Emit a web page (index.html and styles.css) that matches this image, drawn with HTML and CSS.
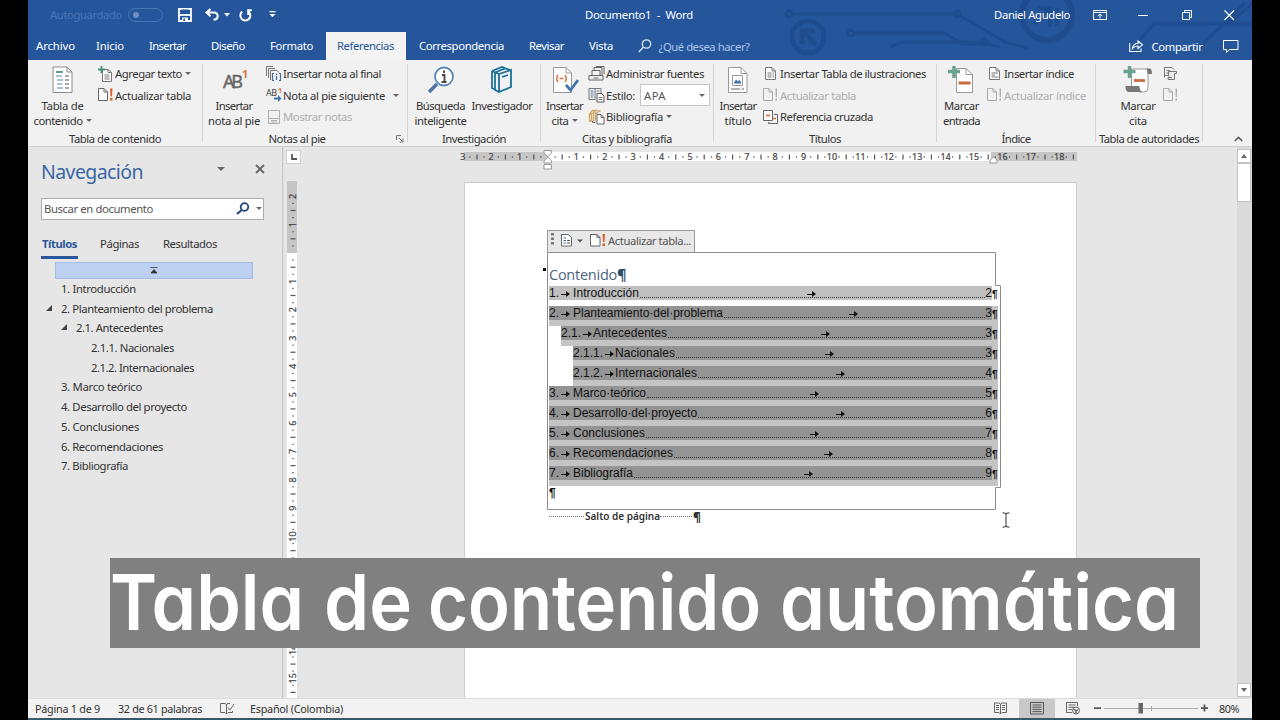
FILE: index.html
```html
<!DOCTYPE html>
<html lang="es">
<head>
<meta charset="utf-8">
<title>Documento1 - Word</title>
<link rel="stylesheet" href="styles.css">
</head>
<body>
<div class="window">
  <header class="top">
    <svg class="circuit" width="470" height="60" viewBox="782 0 470 60" fill="none" stroke="#1f4c8e" stroke-width="3">
      <path d="M793 14H955L968 20L1005 42L1028 48M855 33H945L962 44H985M890 47L902 42H980L1000 47M1140 40L1154 24H1252M1200 47L1245 3M1228 24L1252 4"/>
      <circle cx="789" cy="14" r="3"/><circle cx="957" cy="14" r="3"/><circle cx="851" cy="33" r="3"/><circle cx="984" cy="42" r="3"/>
      <circle cx="808" cy="37" r="16" stroke-width="5"/><path d="M802 44V31H815M803 32L816 45" stroke-width="5"/>
      <circle cx="1047" cy="15" r="25" stroke-width="6"/><path d="M1038 8H1050V27M1049 10L1034 24M1057 8V26" stroke-width="4"/>
    </svg>
    <div class="titlebar">
      <span class="auto"><span class="fit" data-w="72">Autoguardado</span></span>
      <span class="toggle"></span>
      <svg class="i-save" width="14" height="14" viewBox="0 0 14 14"><path d="M1 1H13V13H1Z" fill="none" stroke="#fff" stroke-width="1.8"/><path d="M3 1.5H11V6H3Z" fill="#2558a0"/><path d="M1 7H13" stroke="#fff" stroke-width="1.8"/><path d="M4 9.5H10V13H4Z" fill="#fff"/><path d="M5.3 10.5H7V13H5.3Z" fill="#2558a0"/></svg>
      <svg class="i-undo" width="14" height="13" viewBox="0 0 14 13" fill="none" stroke="#fff" stroke-width="2"><path d="M5.5 1L1.5 4.6L5.5 8.2M2 4.6H9C14 4.6 14 11.6 8.5 11.6"/></svg>
      <svg class="i-dd" width="6" height="4" viewBox="0 0 6 4"><path d="M0 0H6L3 3.5Z" fill="#fff"/></svg>
      <svg class="i-redo" width="13" height="14" viewBox="0 0 13 14" fill="none" stroke="#fff" stroke-width="2"><path d="M3.2 3.6A5 5 0 1 0 9.6 3.7M9.2 7V2.2H12.8"/></svg>
      <svg class="i-qat" width="7" height="7" viewBox="0 0 7 7"><path d="M.5 0H6.5V1.2H.5ZM.5 3H6.5L3.5 6.3Z" fill="#fff"/></svg>
      <span class="doc-title"><span class="fit" data-w="108">Documento1&nbsp; -&nbsp; Word</span></span>
      <span class="user"><span class="fit" data-w="76">Daniel Agudelo</span></span>
      <svg class="win-icons" width="142" height="12" viewBox="1094 8 142 12" fill="none" stroke="#fff"><path d="M1094.5 9.5H1107.5V18.5H1094.5ZM1094.5 11.5H1107.5M1101 17.5V13M1098.800 15L1101 13L1103.200 15"/><path d="M1139 14.500H1149"/><path d="M1183.500 11.500H1190.500V18.500H1183.500ZM1185.500 11V9.500H1192.500V16.500H1191"/><path d="M1225.500 9.500L1235 19M1235 9.500L1225.500 19" stroke-width="1.2"/></svg>
    </div>
    <nav class="tabs">
      <span class="tab first"><span class="fit" data-w="39">Archivo</span></span>
      <span class="tab"><span class="fit" data-w="28">Inicio</span></span>
      <span class="tab"><span class="fit" data-w="37">Insertar</span></span>
      <span class="tab"><span class="fit" data-w="34">Diseño</span></span>
      <span class="tab"><span class="fit" data-w="43">Formato</span></span>
      <span class="tab active"><span class="fit" data-w="57">Referencias</span></span>
      <span class="tab"><span class="fit" data-w="85">Correspondencia</span></span>
      <span class="tab"><span class="fit" data-w="35">Revisar</span></span>
      <span class="tab"><span class="fit" data-w="24">Vista</span></span>
      <svg class="i-find" width="14" height="14" viewBox="0 0 14 14" fill="none" stroke="#dfe8f5" stroke-width="1.3"><circle cx="8.500" cy="5" r="4.200"/><path d="M5.500 8L.8 13"/></svg>
      <span class="tell"><span class="fit" data-w="91">¿Qué desea hacer?</span></span>
      <svg class="i-share" width="15" height="14" viewBox="0 0 15 14" fill="none" stroke="#fff" stroke-width="1.100"><path d="M.7 4V12.500H12V9.500M3.500 9.500C4 5.500 6.500 4.500 9 4.500V2L13.500 5.800L9 9.500V7C7 7 5 7.500 3.500 9.500Z"/></svg>
      <span class="share"><span class="fit" data-w="51">Compartir</span></span>
      <svg class="i-comment" width="16" height="14" viewBox="0 0 16 14" fill="none" stroke="#fff"><path d="M.5 .5H15V9.500H6.500L3.500 12.500V9.500H.5Z"/></svg>
    </nav>
  </header>

  <section class="ribbon">
    <div class="group g1">
      <div class="body">
        <div class="big"><svg width="22" height="28" viewBox="0 0 22 28" fill="none"><path d="M1 1H15L20 6V26.500H1Z" fill="#fff" stroke="#8a8a8a"/><path d="M15 1V6H20" stroke="#8a8a8a"/><path d="M4 6H11" stroke="#2f7a6b" stroke-width="1.500"/><path d="M4 10H10M5 14H11M5 18H10M5 22H11" stroke="#5583ac"/><path d="M13 10H17M13 14H17M13 18H17M13 22H17" stroke="#555"/></svg>
          <span class="fit" data-w="42">Tabla de</span><span class="ln"><span class="fit" data-w="49">contenido</span><i class="dd"></i></span></div>
        <div class="col">
          <div class="row"><svg width="16" height="16" viewBox="0 0 16 16" fill="none"><path d="M4.500 3.500H10L13.500 6.500V15.500H4.500Z" fill="#fff" stroke="#777"/><path d="M10 3.500V6.500H13.500M6.500 9H11.500M6.500 11H11.500M6.500 13H11.500" stroke="#777"/><path d="M3.500 0V7M0 3.500H7" stroke="#4d8f7e" stroke-width="1.800"/></svg><span class="fit" data-w="67">Agregar texto</span><i class="dd"></i></div>
          <div class="row"><svg width="16" height="16" viewBox="0 0 16 16" fill="none"><path d="M.5 1.500H6L9.500 5V13.500H.5Z" fill="#fff" stroke="#666"/><path d="M6 1.500V5H9.500" stroke="#666"/><path d="M12 1.500H14.500L14 9.500H12.500ZM12 11H14.500V13.500H12Z" fill="#d9622b"/></svg><span class="fit" data-w="76">Actualizar tabla</span></div>
        </div>
      </div>
      <div class="caption"><span class="fit" data-w="92">Tabla de contenido</span></div>
    </div>
    <div class="group g2">
      <div class="body">
        <div class="big"><svg width="28" height="28" viewBox="0 0 28 28"><text x="3" y="22" class="ab" textLength="20">AB</text><text x="22" y="12" class="one">1</text></svg>
          <span class="fit" data-w="37">Insertar</span><span class="fit" data-w="52">nota al pie</span></div>
        <div class="col">
          <div class="row"><svg width="16" height="16" viewBox="0 0 16 16" fill="none" stroke="#777"><path d="M.5 10V.5H7M2.500 12V2.500H9M4.500 14V4.500H11L13 6.500" /><path d="M8 7.500H6.500V14.500H8M13 7.500H14.500V14.500H13M10.500 10V14M10.500 7.500V9" stroke="#4472a8" stroke-width="1.200"/></svg><span class="fit" data-w="98">Insertar nota al final</span></div>
          <div class="row"><svg width="16" height="16" viewBox="0 0 16 16"><text x="0" y="9" class="abs" textLength="11">AB</text><text x="12" y="6" class="ones">1</text><path d="M8 10.500H12V8L15.500 11.500L12 15V12.500H8Z" fill="#3f74b0"/></svg><span class="fit" data-w="102">Nota al pie siguiente</span><i class="dd far"></i></div>
          <div class="row off"><svg width="16" height="16" viewBox="0 0 16 16" fill="none" stroke="#b0b0b0"><path d="M2.500 1.500H13.500V14.500H2.500ZM2.500 9.500H13.500M5 11.500H11M5 13H11"/></svg><span class="fit" data-w="69">Mostrar notas</span></div>
        </div>
      </div>
      <div class="caption notes"><span class="fit" data-w="57">Notas al pie</span></div>
      <svg class="launch" width="8" height="8" viewBox="0 0 8 8" fill="none" stroke="#777"><path d="M.5 5V.5H5M3 3L6.500 6.500M7 3.500V7H3.500"/></svg>
    </div>
    <div class="group g3">
      <div class="body">
        <div class="big"><svg width="28" height="28" viewBox="0 0 28 28" fill="none"><path d="M10 18L2 26" stroke="#4d76a8" stroke-width="3.500"/><circle cx="17" cy="10.500" r="9" fill="#fff" stroke="#5b87b8" stroke-width="1.800"/><path d="M17 4.500V7M15 9H17.500V16M14.500 16H19.500" stroke="#444" stroke-width="1.800"/></svg>
          <span class="fit" data-w="49">Búsqueda</span><span class="fit" data-w="52">inteligente</span></div>
        <div class="big"><svg width="24" height="28" viewBox="0 0 24 28" fill="none" stroke="#1b7099" stroke-width="1.800"><path d="M2 5L12 1L17 3M2 5V22L5 23.500M2 5L6 7M5 6.500L15 2.500L20 4M5 7V24L9 26M9 8L21 4V21L9 26ZM5 6.500L9 8"/><path d="M12 11L18 9"/></svg>
          <span class="fit" data-w="61">Investigador</span></div>
      </div>
      <div class="caption"><span class="fit" data-w="64">Investigación</span></div>
    </div>
    <div class="group g4">
      <div class="body">
        <div class="big"><svg width="28" height="28" viewBox="0 0 28 28" fill="none"><path d="M2.500 1.500H15L20.500 7V26.500H2.500Z" fill="#fff" stroke="#999"/><path d="M15 1.500V7H20.500" stroke="#999"/><path d="M7 9Q4.500 12.500 7 16M14 9Q16.500 12.500 14 16M8.500 12.500H12.500" stroke="#d47540" stroke-width="1.500"/><path d="M15 19L19.500 24L27 14" stroke="#4377ac" stroke-width="2.800"/></svg>
          <span class="fit" data-w="37">Insertar</span><span class="ln"><span class="fit" data-w="17">cita</span><i class="dd"></i></span></div>
        <div class="col">
          <div class="row"><svg width="17" height="16" viewBox="0 0 17 16" fill="none" stroke="#666"><path d="M5.500 5V1.500H13.500V9M7.500 1V.5H15.500V8"/><path d="M3.500 9V4.500H11.500V9M.5 9.500H14.500V14H.5ZM5 12H10" fill="#f1f1f1"/></svg><span class="fit" data-w="98">Administrar fuentes</span></div>
          <div class="row"><svg width="17" height="16" viewBox="0 0 17 16" fill="none"><path d="M.5 1.500H12.500V6M.5 1.500V12.500H7M6.500 1.500V12.500" stroke="#777"/><path d="M2 4H5M2 6H5M2 8H5M2 10H5M8 4H11" stroke="#5583ac"/><path d="M8.500 6.500H13L15.500 9V15H8.500Z" fill="#fff" stroke="#555"/><path d="M10 10.500H14M10 12.500H14" stroke="#777"/></svg><span class="fit" data-w="29">Estilo:</span><span class="select"><span class="fit" data-w="22">APA</span><i class="dd"></i></span></div>
          <div class="row"><svg width="17" height="16" viewBox="0 0 17 16" fill="none"><path d="M1 5V12H3V5ZM5 4V12M7 3V12M1 5L4 1.500H6M4 5L7 1.500H9M8 5L10 2H12" stroke="#d1a766" stroke-width="1.300"/><path d="M8.500 5.500H12.500L15.500 8.500V15H8.500Z" fill="#fff" stroke="#666"/><path d="M12.500 5.500V8.500H15.500M4 12V13.500H7" stroke="#666"/></svg><span class="fit" data-w="57">Bibliografía</span><i class="dd"></i></div>
        </div>
      </div>
      <div class="caption"><span class="fit" data-w="90">Citas y bibliografía</span></div>
    </div>
    <div class="group g5">
      <div class="body">
        <div class="big"><svg width="22" height="28" viewBox="0 0 22 28" fill="none"><path d="M1.500 1.500H14L20 7.500V26.500H1.500Z" fill="#fff" stroke="#999"/><path d="M14 1.500V7.500H20M5.500 9.500H15.500V19.500H5.500Z" stroke="#999"/><path d="M6.500 17.500L9 13.500L11 15.500L12.500 13.500L14.500 17.500Z" fill="#3c73ab"/><path d="M4 23H17" stroke="#666" stroke-dasharray="9 1.500"/></svg>
          <span class="fit" data-w="37">Insertar</span><span class="fit" data-w="27">título</span></div>
        <div class="col">
          <div class="row"><svg width="16" height="16" viewBox="0 0 16 16" fill="none" stroke="#777"><path d="M2.500 1.500H9L12.500 5V13.500H2.500Z" fill="#fff"/><path d="M9 1.500V5H12.500"/><path d="M4.500 7H11M4.500 9H11M4.500 11H11" stroke-dasharray="4 1"/></svg><span class="fit" data-w="146">Insertar Tabla de ilustraciones</span></div>
          <div class="row off"><svg width="16" height="16" viewBox="0 0 16 16" fill="none"><path d="M.5 1.500H6L9.500 5V13.500H.5ZM6 1.500V5H9.500" stroke="#aaa"/><path d="M12.500 1.500H14L13.800 10H12.700ZM12.500 11.500H14V13.500H12.500Z" fill="#aaa"/></svg><span class="fit" data-w="76">Actualizar tabla</span></div>
          <div class="row"><svg width="16" height="16" viewBox="0 0 16 16" fill="none" stroke="#666"><path d="M.5 1.500H9.500V11.500H.5Z" fill="#fff"/><path d="M11 5.500H14.500V14.500H5.500V13"/><path d="M3 6.500H7" stroke="#d47540" stroke-width="1.800"/><path d="M9.500 9.500H13" stroke="#d47540" stroke-width="1.500"/></svg><span class="fit" data-w="93">Referencia cruzada</span></div>
        </div>
      </div>
      <div class="caption"><span class="fit" data-w="32">Títulos</span></div>
    </div>
    <div class="group g6">
      <div class="body">
        <div class="big"><svg width="30" height="28" viewBox="0 0 30 28" fill="none"><path d="M9.500 2.500H19L25.500 8.500V26.500H9.500Z" fill="#fff" stroke="#999"/><path d="M19 2.500V8.500H25.500" stroke="#999"/><path d="M11.500 17H23.500" stroke="#c96a3f" stroke-width="3"/><path d="M7 0V12M1 5.500H13" stroke="#6da18f" stroke-width="3.500"/></svg>
          <span class="fit" data-w="35">Marcar</span><span class="fit" data-w="37">entrada</span></div>
        <div class="col">
          <div class="row"><svg width="16" height="16" viewBox="0 0 16 16" fill="none" stroke="#777"><path d="M2.500 1.500H9L12.500 5V13.500H2.500Z" fill="#fff"/><path d="M9 1.500V5H12.500M4.500 7H11M4.500 9H8M4.500 11H11"/></svg><span class="fit" data-w="70">Insertar índice</span></div>
          <div class="row off"><svg width="16" height="16" viewBox="0 0 16 16" fill="none"><path d="M.5 1.500H6L9.500 5V13.500H.5ZM6 1.500V5H9.500" stroke="#aaa"/><path d="M12.500 1.500H14L13.800 10H12.700ZM12.500 11.500H14V13.500H12.500Z" fill="#aaa"/></svg><span class="fit" data-w="82">Actualizar índice</span></div>
        </div>
      </div>
      <div class="caption"><span class="fit" data-w="29">Índice</span></div>
    </div>
    <div class="group g7">
      <div class="body">
        <div class="big"><svg width="30" height="28" viewBox="0 0 30 28" fill="none"><path d="M8.500 3H25V22Q25 26 21 26H16V21H8.500Z" fill="#fff" stroke="#999"/><path d="M23 2.500H27Q29 3 29 8H24.500Q24.500 3 23 2.500ZM2.500 20H16Q17 25 19 26H6Q2.500 26 2.500 20Z" fill="#777"/><path d="M11 14.500H22" stroke="#c96a3f" stroke-width="2.800"/><path d="M6.500 0V12M.5 5.500H12.500" stroke="#6da18f" stroke-width="3.500"/></svg>
          <span class="fit" data-w="35">Marcar</span><span class="fit" data-w="18">cita</span></div>
        <div class="col">
          <div class="row"><svg width="16" height="16" viewBox="0 0 16 16" fill="none" stroke="#777"><path d="M1.500 11.500V1.500H9L11 3.500M3.500 4.500H7M3.500 7H5M1.500 9.500H5"/><path d="M5.500 10.500V5.500H13.500V7.500H11.500V13.500H5V11.500H9" fill="#eee"/></svg></div>
          <div class="row off"><svg width="16" height="16" viewBox="0 0 16 16" fill="none"><path d="M.5 1.500H6L9.500 5V13.500H.5ZM6 1.500V5H9.500" stroke="#aaa"/><path d="M12.500 1.500H14L13.800 10H12.700ZM12.500 11.500H14V13.500H12.500Z" fill="#aaa"/></svg></div>
        </div>
      </div>
      <div class="caption"><span class="fit" data-w="100">Tabla de autoridades</span></div>
    </div>
    <svg class="collapse" width="9" height="6" viewBox="0 0 9 6" fill="none" stroke="#555" stroke-width="1.500"><path d="M.8 5L4.500 1.300L8.200 5"/></svg>
  </section>

  <main class="work">
    <aside class="nav">
      <div class="nav-head"><h2><span class="fit" data-w="102">Navegación</span></h2><i class="dd"></i><svg width="10" height="10" viewBox="0 0 10 10" stroke="#666" stroke-width="1.800"><path d="M1 1L9 9M9 1L1 9"/></svg></div>
      <div class="search"><span class="fit" data-w="109">Buscar en documento</span><svg width="14" height="13" viewBox="0 0 14 13" fill="none" stroke="#1f4a75" stroke-width="1.800"><circle cx="8.500" cy="5" r="3.800"/><path d="M5.700 8L1 12" stroke-width="2.200"/></svg><i class="dd"></i></div>
      <div class="nav-tabs"><span class="on"><span class="fit" data-w="35">Títulos</span></span><span class="two"><span class="fit" data-w="39">Páginas</span></span><span class="three"><span class="fit" data-w="54">Resultados</span></span></div>
      <div class="jump"><svg width="8" height="7" viewBox="0 0 8 7"><path d="M.5 .5H7.500M1 6L4 2.500L7 6Z" stroke="#333" fill="#333" stroke-width=".8"/></svg></div>
      <ul class="outline">
        <li><span class="fit" data-w="75">1. Introducción</span></li>
        <li class="open"><span class="fit" data-w="152">2. Planteamiento del problema</span></li>
        <li class="open l2"><span class="fit" data-w="87">2.1. Antecedentes</span></li>
        <li class="l3"><span class="fit" data-w="83">2.1.1. Nacionales</span></li>
        <li class="l3"><span class="fit" data-w="103">2.1.2. Internacionales</span></li>
        <li><span class="fit" data-w="81">3. Marco teórico</span></li>
        <li><span class="fit" data-w="126">4. Desarrollo del proyecto</span></li>
        <li><span class="fit" data-w="78">5. Conclusiones</span></li>
        <li><span class="fit" data-w="102">6. Recomendaciones</span></li>
        <li><span class="fit" data-w="67">7. Bibliografía</span></li>
      </ul>
    </aside>
    <div class="vcol">
      <div class="tabstop"><svg width="6" height="6" viewBox="0 0 6 6" fill="none" stroke="#555" stroke-width="1.800"><path d="M1 0V5H6"/></svg></div>
      <svg id="vruler" width="10" height="517" viewBox="0 0 10 517"><path d="M0 0H10V517H0Z" fill="#fff"/><path d="M0 0H10V72H0Z" fill="#c6c6c6"/></svg>
    </div>
    <div class="canvas">
      <svg id="hruler" width="622" height="20" viewBox="0 0 622 20"><path d="M5 2H618V11H5Z" fill="#fff"/><path d="M5 2H89V11H5ZM532 2H618V11H532Z" fill="#c6c6c6"/></svg>
      <article class="page">
        <div class="toc-bar">
          <svg width="62" height="14" viewBox="0 0 62 14" fill="none"><path d="M3.500 0V12" stroke="#777" stroke-width="3" stroke-dasharray="2.500 2"/><path d="M12.500 1.500H19L22.500 4.500V13H12.500Z" fill="#fff" stroke="#666"/><path d="M14.500 5H17M14.500 7.500H17M14.500 10H17" stroke="#3f74b0"/><path d="M18 7.500H21M18 10H21" stroke="#555"/><path d="M28 6.500H34L31 9.500Z" fill="#555"/><path d="M41.500 1.500H48L51 4.500V13H41.500ZM48 1.500V4.500H51" fill="#fff" stroke="#666"/><path d="M53.500 1H56L55.500 9H54ZM53.500 10.500H56V13H53.500Z" fill="#d9622b"/></svg>
          <span class="fit" data-w="83">Actualizar tabla...</span>
        </div>
        <section class="toc">
          <svg class="outline-box" width="460" height="260" viewBox="0 0 460 260" fill="none" stroke="#8c8c8c"><path d="M.5 .5H448.500V33.500H453.500V235.500H448.500V257.500H.5Z"/></svg>
          <h1><span class="fit" data-w="68">Contenido</span><b>¶</b></h1>
          <div class="entries">
            <div class="entry lone"><div class="ink"><span class="no">1.</span><i class="ar"></i><span class="fit" data-w="66">Introducción</span><span class="dots"><i class="ar"></i></span><span>2</span></div><b>¶</b></div>
            <div class="entry"><div class="ink"><span class="no">2.</span><i class="ar"></i><span class="fit" data-w="150">Planteamiento·del·problema</span><span class="dots"><i class="ar"></i></span><span>3</span></div><b>¶</b></div>
            <div class="entry e2"><div class="ink"><span class="no">2.1.</span><i class="ar"></i><span class="fit" data-w="74">Antecedentes</span><span class="dots"><i class="ar"></i></span><span>3</span></div><b>¶</b></div>
            <div class="entry e3"><div class="ink"><span class="no">2.1.1.</span><i class="ar"></i><span class="fit" data-w="60">Nacionales</span><span class="dots"><i class="ar"></i></span><span>3</span></div><b>¶</b></div>
            <div class="entry e3"><div class="ink"><span class="no">2.1.2.</span><i class="ar"></i><span class="fit" data-w="82">Internacionales</span><span class="dots"><i class="ar"></i></span><span>4</span></div><b>¶</b></div>
            <div class="entry"><div class="ink"><span class="no">3.</span><i class="ar"></i><span class="fit" data-w="73">Marco·teórico</span><span class="dots"><i class="ar"></i></span><span>5</span></div><b>¶</b></div>
            <div class="entry"><div class="ink"><span class="no">4.</span><i class="ar"></i><span class="fit" data-w="124">Desarrollo·del·proyecto</span><span class="dots"><i class="ar"></i></span><span>6</span></div><b>¶</b></div>
            <div class="entry"><div class="ink"><span class="no">5.</span><i class="ar"></i><span class="fit" data-w="72">Conclusiones</span><span class="dots"><i class="ar"></i></span><span>7</span></div><b>¶</b></div>
            <div class="entry"><div class="ink"><span class="no">6.</span><i class="ar"></i><span class="fit" data-w="100">Recomendaciones</span><span class="dots"><i class="ar"></i></span><span>8</span></div><b>¶</b></div>
            <div class="entry"><div class="ink"><span class="no">7.</span><i class="ar"></i><span class="fit" data-w="60">Bibliografía</span><span class="dots"><i class="ar"></i></span><span>9</span></div><b>¶</b></div>
          </div>
          <div class="empty">¶</div>
        </section>
        <div class="break"><span class="rule"></span><span class="fit" data-w="75">Salto de página</span><span class="rule"></span><b>¶</b></div>
      </article>
      <svg class="ibeam" width="8" height="16" viewBox="0 0 8 16" fill="none" stroke="#333"><path d="M.5 1H3L4 2L5 1H7.500M4 2V14M.5 15H3L4 14L5 15H7.500"/></svg>
    </div>
    <div class="scroll"><span class="btn"><i class="up"></i></span><span class="thumb"></span><span class="track"></span><span class="btn"><i class="dn"></i></span></div>
  </main>

  <footer class="status">
    <span class="s1"><span class="fit" data-w="65">Página 1 de 9</span></span>
    <span class="s2"><span class="fit" data-w="84">32 de 61 palabras</span></span>
    <svg class="s3" width="15" height="13" viewBox="0 0 15 13" fill="none" stroke="#666"><path d="M6.500 2.500L5 1.500H.5V10.500H5L6.500 12L8 10.500H12.500V9M6.500 2.500V12M6.500 2.500L8 1.500H10M8 5.500L10 8L14 2"/></svg>
    <span class="s4"><span class="fit" data-w="93">Español (Colombia)</span></span>
    <svg class="s5" width="13" height="13" viewBox="0 0 13 13" fill="none" stroke="#666"><path d="M6.500 2L5 1H.5V10.500H5L6.500 12L8 10.500H12.500V1H8ZM6.500 2V12M2 3.500H5M2 5.500H5M2 7.500H5M8 3.500H11M8 5.500H11M8 7.500H11"/></svg>
    <span class="s6"><svg width="14" height="13" viewBox="0 0 14 13" fill="none" stroke="#555"><path d="M.5 .5H13.500V12H.5ZM2.500 3H11.500M2.500 5.200H11.500M2.500 7.400H11.500M2.500 9.600H11.500"/></svg></span>
    <svg class="s7" width="14" height="13" viewBox="0 0 14 13" fill="none" stroke="#666"><path d="M6 10.500H.5V.5H11.500V4M2.500 3H9.500M2.500 5.300H8M2.500 7.600H6"/><circle cx="10" cy="8.500" r="3.500"/><path d="M8 7L10 9L12 7.500M10 9V12" stroke-width="1.500"/></svg>
    <svg class="s8" width="116" height="12" viewBox="0 0 116 12"><path d="M0 5.200H7V7H0ZM107 5.200H114V7H107ZM109.600 2.600H111.400V9.600H109.600Z" fill="#555"/><path d="M10 6.500H104M57.500 4V9" stroke="#aaa"/><path d="M44.500 1H49V11.500H44.500Z" fill="#666"/></svg>
    <span class="s9"><span class="fit" data-w="20">80%</span></span>
  </footer>
</div>
<div class="banner"><span class="word w1" data-w="194">Tabla</span> <span class="word w2" data-w="88">de</span> <span class="word w3" data-w="333">contenido</span> <span class="word w4" data-w="399">automática</span></div>
<script src="app.js"></script>
</body>
</html>
```

FILE: styles.css
```css
*{box-sizing:border-box}
body{margin:0;width:1280px;height:720px;overflow:hidden;background:#000;position:relative;font:11.3px/15px "Noto Sans","Open Sans",sans-serif;color:#333}
.window{width:1224px;height:720px;margin:0 28px;display:flex;flex-direction:column;background:#e6e6e6}
.fit{display:inline-block;white-space:nowrap;flex:none}
svg{display:block;flex:none}
.dd{display:block;flex:none;width:0;height:0;border:3px solid transparent;border-top:3px solid #666;border-bottom:0}

.top{height:60px;background:#25569c;color:#fff;position:relative;flex:none}
.circuit{position:absolute;right:0;top:0}
.titlebar{position:relative;height:32px;display:flex;align-items:center;padding-bottom:3px}
.auto{margin-left:22px;color:#4a75b5}
.toggle{width:35px;height:14px;border:1px solid #4a75b5;border-radius:7px;margin-left:6px;display:flex;align-items:center;padding-left:4px}
.toggle::before{content:"";width:6px;height:6px;border-radius:50%;background:#6a90c8}
.i-save{margin-left:15px}
.i-undo{margin-left:13px}
.i-dd{margin-left:5px}
.i-redo{margin-left:9px}
.i-qat{margin-left:17px}
.doc-title{margin-left:309px}
.user{margin-left:301px}
.win-icons{margin-left:23px}
.tabs{position:relative;height:28px;display:flex;align-items:center}
.tab{height:28px;line-height:27px;padding:0 12.500px}
.tab.first{padding:0 8.500px 0 8px}
.tab.active{background:#f3f3f3;color:#2b579a;padding:0 11.500px}
.tab.active+.tab{padding-left:13.500px}
.i-find{margin:0 7px 0 12px}
.tell{color:#a9c3ea}
.i-share{margin-left:379px}
.share{margin-left:8px}
.i-comment{margin-left:20px;margin-top:1px}

.ribbon{height:87px;flex:none;background:#f1f1f1;border-bottom:1px solid #cfcfcf;display:flex;position:relative}
.group{position:relative;margin:4px 0;height:78px;border-right:1px solid #d4d4d4;flex:none}
.g1{width:175px}.g2{width:205px}.g3{width:133px}.g4{width:173px}.g5{width:223px}.g6{width:159px}.g7{width:107px}
.body{height:68px;display:flex}
.big{display:flex;flex-direction:column;align-items:center;padding-top:2px}
.big>svg{margin-bottom:4px}
.ln{display:flex;align-items:center;gap:3px}
.g1 .big{width:69px}
.g2 .big{width:62px}
.g3 .big{width:65px}
.g3 .big+.big{width:58px}
.g4 .big{width:47px}
.g5 .big{width:48px}
.g6 .big{width:49px}
.g7 .big{width:48px;margin-left:18px}
.col{margin-top:-1px}
.row{height:21.600px;display:flex;align-items:center}
.row>svg{width:18px;height:16px}
.row .dd{margin-left:3px}
.row .far{margin-left:8px}
.off{color:#aeaeae}
.select{margin-left:5px;width:70px;height:22px;background:#fff;border:1px solid #c6c6c6;display:flex;align-items:center;justify-content:space-between;padding:0 4px 0 3px;color:#555}
.caption{text-align:center;line-height:14px}
.notes{padding-right:16px}
.launch{position:absolute;right:3px;bottom:-1px}
.collapse{position:absolute;right:9px;bottom:4px}
.ab{font:18px "Noto Sans",sans-serif;fill:#666;stroke:#666;stroke-width:.4px}
.one{font:700 11px "Noto Sans",sans-serif;fill:#d47540}
.abs{font:9px "Noto Sans",sans-serif;fill:#444}
.ones{font:700 7px "Noto Sans",sans-serif;fill:#d47540}

.work{height:551px;flex:none;display:flex}
.nav{width:255px;border-right:1px solid #c8c8c8;flex:none}
.nav-head{display:flex;align-items:center;height:22px;margin:14px 17px 0 13px}
.nav h2{margin:0;font-weight:400;font-size:19.500px;line-height:22px;color:#3b66a5}
.nav-head .dd{border-width:4.500px 4.500px 0;margin:-6px 0 0 74px}
.nav-head svg{margin:-7px 0 0 30px}
.search{margin:15px 0 0 13px;width:223px;height:22px;border:1px solid #ababab;background:#fff;display:flex;align-items:center;padding:0 0 2px 2px;color:#555}
.search svg{margin-left:83px}
.search .dd{margin-left:6px}
.nav-tabs{margin:13px 0 0 13px;display:flex;height:28px}
.nav-tabs .on{width:37px;border-bottom:3px solid #2b579a;color:#2b579a;font-weight:700;padding-left:1px;height:26px;line-height:21px}
.nav-tabs .two{margin-left:22px;line-height:21px}
.nav-tabs .three{margin-left:24px;line-height:21px}
.jump{margin:1px 0 0 27px;width:198px;height:17px;background:#bed0f2;border:1px solid #a3bde8;display:flex;align-items:center;justify-content:center}
.outline{list-style:none;margin:0;padding:0}
.outline li{height:19.700px;line-height:20px;padding-left:33px;position:relative}
.outline .l2{padding-left:48px}
.outline .l3{padding-left:63px}
.open::before{content:"";position:absolute;left:18px;top:6px;border-left:6px solid transparent;border-bottom:6px solid #444}
.open.l2::before{left:33px}
.vcol{width:21px;flex:none;padding:3px 0 0 2px;border-left:1px solid #dedede}
.tabstop{width:15px;height:14px;background:#fff;border:1px solid #d0d0d0;margin-bottom:17px;display:flex;align-items:center;justify-content:center}
#vruler{margin-left:1px;overflow:visible}
.canvas{flex:1;position:relative;overflow:hidden}
#hruler{margin:3px 0 0 155px;overflow:visible}
.rn{font:9px "Noto Sans",sans-serif;fill:#444;stroke:#444;stroke-width:.2px;text-anchor:middle}
.page{margin:12px 0 0 160px;width:613px;height:520px;background:#fff;border:1px solid #cdcdcd;border-bottom:0;padding:47px 0 0 82px}
.toc-bar{width:148px;height:22px;background:#e8e8e8;border:1px solid #999;border-bottom:0;display:flex;align-items:center;padding-left:1px;padding-bottom:3px;color:#555}
.toc-bar svg{margin-right:-3px}
.toc{position:relative;height:258px;padding:13px 0 0 2px;font-family:"Liberation Sans",Arial,sans-serif;font-size:12px;color:#111}
.outline-box{position:absolute;left:0;top:0}
.toc::before{content:"";position:absolute;left:-4px;top:16px;width:3px;height:3px;background:#111}
.toc h1{margin:0;font:400 14.500px/20px "Open Sans","Noto Sans",sans-serif;color:#4a6480;height:21px;display:flex;position:relative}
.toc h1 b{color:#2f4d6b}
.entries{position:relative;width:449px}
.entry{height:20px;background:#c4c4c4;display:flex;line-height:15px}
.entry.lone{background:none}
.entry.lone .ink{background:#c0c0c0}
.ink{height:14px;flex:1;background:#949494;display:flex}
.entry b{width:6px;font-size:10px;line-height:17px}
.e2{margin-left:12px}.e3{margin-left:24px}
.ink>.ar{margin:5px 3px 0 1px}
.e2 .ink>.ar,.e3 .ink>.ar{margin-right:1px}
.ar{display:block;flex:none;width:10px;height:6px;position:relative}
.ar::before{content:"";position:absolute;left:1px;right:3px;top:2.500px;height:1px;background:#111}
.ar::after{content:"";position:absolute;right:0;top:0;border:3px solid transparent;border-left:4px solid #111;border-right:0}
.dots{flex:1;height:12px;margin-left:1px;border-bottom:1px dotted #333;display:flex;justify-content:center;padding:5px 4px 0 0}
.empty{line-height:15px;font-weight:700}
.break{display:flex;margin-left:2px;line-height:13px;font-size:10px;font-weight:600;color:#333}
.break .rule{width:35px;height:7px;border-bottom:1px dotted #777;margin-right:1px}
.break .rule+b{font-size:12px}
.break .fit+.rule{width:32px}
.ibeam{position:absolute;left:698px;top:365px}
.scroll{width:15px;flex:none;background:#dadada;display:flex;flex-direction:column;padding:2px 1px 1px 0}
.btn{height:14px;background:#fff;border:1px solid #c4c4c4;display:flex;align-items:center;justify-content:center}
.thumb{height:39px;background:#fff;border:1px solid #c4c4c4}
.track{flex:1}
.up{border:3.500px solid transparent;border-bottom:4px solid #666;border-top:0}
.dn{border:3.500px solid transparent;border-top:4px solid #666;border-bottom:0}

.status{height:22px;flex:none;background:#f2f2f2;border-bottom:2px solid #38586b;display:flex;align-items:center;border-top:1px solid #dcdcdc;font-size:10.800px;padding-bottom:1px}
.s1{margin-left:7px}.s2{margin-left:18px}.s3{margin-left:18px}.s4{margin-left:15px}
.s5{margin-left:651px}
.s6{margin-left:12px;width:36px;height:19px;background:#c8c8c8;display:flex;align-items:center;justify-content:center}
.s7{margin-left:11px}.s8{margin-left:14px}.s9{margin-left:9px}

.banner{position:absolute;left:110px;top:558px;width:1090px;height:90px;background:#808080;color:#fff;display:flex;font:600 77px/88px Inter,Lato,sans-serif;font-feature-settings:"cv11" 1}
.word{flex:none;white-space:nowrap;transform-origin:0 0}
.w1{width:214px}
.w2{width:104px}
.w3{width:352px}
```

FILE: app.js
```js
// Spread each label over its column width.
document.querySelectorAll('.fit').forEach(function (el) {
  var gap = (Number(el.dataset.w) - el.getBoundingClientRect().width) / el.textContent.length;
  el.style.letterSpacing = gap.toFixed(3) + 'px';
});

// Ruler marks: a number per centimetre, a tick at the half and dots at the quarters.
var NS = 'http://www.w3.org/2000/svg';
function mark(svg, vertical, pos, kind, value) {
  var el;
  if (kind === 'n') {
    el = document.createElementNS(NS, 'text');
    el.setAttribute('class', 'rn');
    el.textContent = value;
    el.setAttribute('transform', vertical ? 'translate(9 ' + pos + ') rotate(-90)' : 'translate(' + pos + ' 10)');
  } else {
    var len = kind === 't' ? 5 : 1.4;
    var wide = 1.2;
    el = document.createElementNS(NS, 'rect');
    el.setAttribute('x', vertical ? 6 - len / 2 : pos - wide / 2);
    el.setAttribute('y', vertical ? pos - wide / 2 : 7 - len / 2);
    el.setAttribute('width', vertical ? len : wide);
    el.setAttribute('height', vertical ? wide : len);
    el.setAttribute('fill', '#555');
  }
  svg.appendChild(el);
}
function ruler(id, vertical, zero, step, from, to, min, max) {
  var svg = document.getElementById(id);
  for (var q = from * 4; q <= to * 4; q++) {
    var pos = zero + q * step / 4;
    if (pos < min || pos > max || q === 0) continue;
    if (q % 4 === 0) mark(svg, vertical, pos, 'n', Math.abs(q / 4));
    else mark(svg, vertical, pos, q % 2 === 0 ? 't' : 'd');
  }
}
ruler('hruler', false, 89, 28.4, -3, 19, 3, 617);
ruler('vruler', true, 72, 28.35, -3, 16, 10, 515);

// Indent handles.
var handles = document.createElementNS(NS, 'path');
handles.setAttribute('d', 'M85 0.500H92.500V3L88.800 6.500L85 3ZM88.800 7L92.500 11V13H85V11ZM85 14.500H92.500V19H85ZM531 13V10L534.500 7L538 10V13Z');
handles.setAttribute('fill', '#fff');
handles.setAttribute('stroke', '#999');
document.getElementById('hruler').appendChild(handles);

// Headline words are condensed or widened to their own measure.
document.querySelectorAll('.word').forEach(function (el) {
  var range = document.createRange();
  range.selectNodeContents(el);
  var natural = range.getBoundingClientRect().width;
  el.style.transform = 'scaleX(' + (Number(el.dataset.w) / natural).toFixed(4) + ')';
});
```
